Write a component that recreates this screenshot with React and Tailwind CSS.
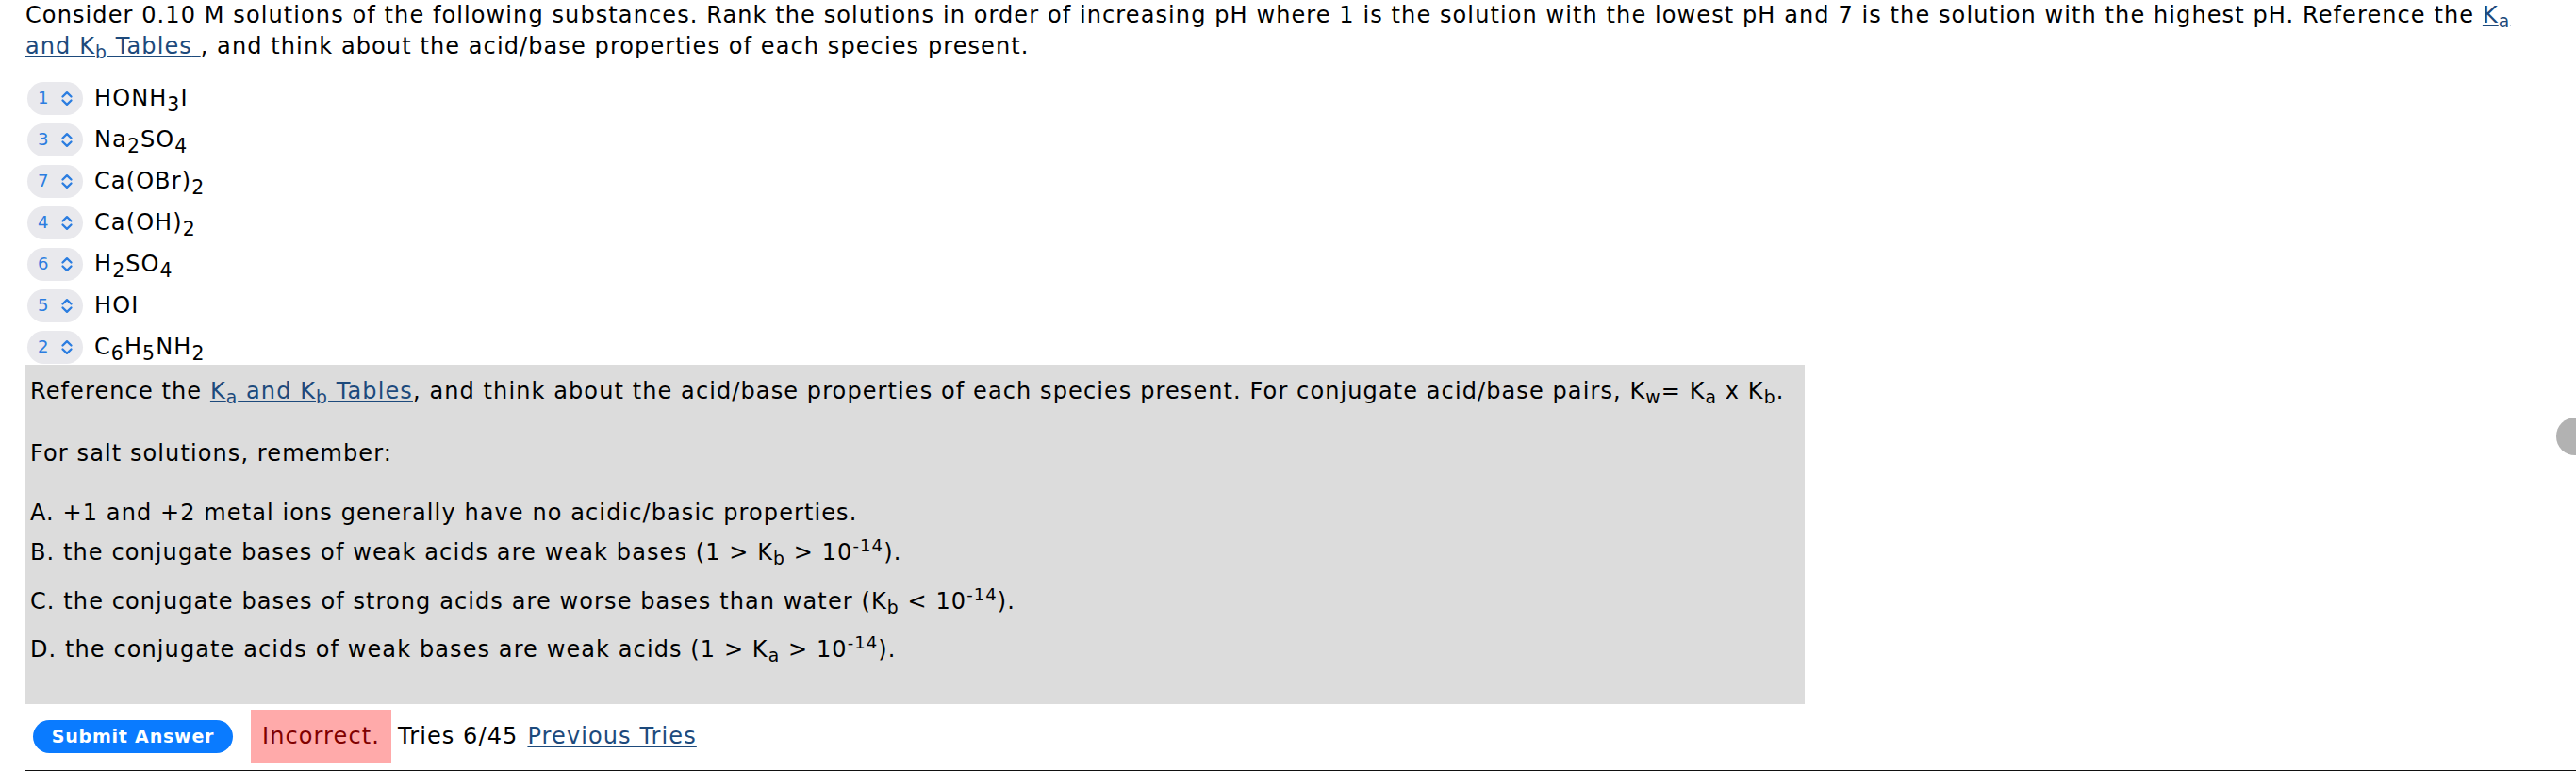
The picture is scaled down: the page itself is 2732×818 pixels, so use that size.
const items = [
  { rank: 1, formula: ['HONH', ['3'], 'I'] },
  { rank: 3, formula: ['Na', ['2'], 'SO', ['4']] },
  { rank: 7, formula: ['Ca(OBr)', ['2']] },
  { rank: 4, formula: ['Ca(OH)', ['2']] },
  { rank: 6, formula: ['H', ['2'], 'SO', ['4']] },
  { rank: 5, formula: ['HOI'] },
  { rank: 2, formula: ['C', ['6'], 'H', ['5'], 'NH', ['2']] },
];

const Sub = ({ children }) => (
  <sub className="text-[0.78em]">{children}</sub>
);

const Chevrons = () => (
  <svg width="14" height="17" viewBox="0 0 14 17" fill="none" stroke="#2b7de0" strokeWidth="2.3" strokeLinecap="round" strokeLinejoin="round">
    <path d="M2.5 6.5 L7 2.2 L11.5 6.5" />
    <path d="M2.5 10.5 L7 14.8 L11.5 10.5" />
  </svg>
);

const Formula = ({ parts }) => (
  <span>
    {parts.map((p, i) =>
      Array.isArray(p) ? (
        <sub key={i} className="text-[0.85em] bottom-[-0.3em]">{p[0]}</sub>
      ) : (
        <span key={i}>{p}</span>
      )
    )}
  </span>
);

export default function App() {
  return (
    <div className="relative min-h-[818px] w-full overflow-hidden bg-white font-['DejaVu_Sans',sans-serif] text-[24px] tracking-[1.1px] text-black">
      <div className="pl-[27px]">
        {/* Question */}
        <p className="leading-[33px]">
          Consider 0.10 M solutions of the following substances. Rank the solutions in order of increasing pH where 1 is the solution with the lowest pH and 7 is the solution with the highest pH. Reference the{' '}
          <a href="#" className="text-[#1d4a7c] underline">
            K<Sub>a</Sub>
            <br />
            and K<Sub>b</Sub> Tables{' '}
          </a>
          , and think about the acid/base properties of each species present.
        </p>

        {/* Ranking rows */}
        <div className="mt-[16px] flex flex-col">
          {items.map((item) => (
            <div key={item.formula.join('')} className="flex h-[44px] items-center">
              <div className="ml-[2px] flex h-[35px] w-[59px] items-center rounded-full bg-[#e9e9ed] pl-[11px] pr-[10px] tracking-normal">
                <span className="w-[14px] text-[18px] leading-none text-[#2b7de0]">{item.rank}</span>
                <span className="ml-[11px] flex items-center">
                  <Chevrons />
                </span>
              </div>
              <div className="ml-[12px] leading-[33px]">
                <Formula parts={item.formula} />
              </div>
            </div>
          ))}
        </div>

        {/* Hint box */}
        <div className="mt-[-3px] w-[1887px] bg-[#dcdcdc] pb-[41px] pl-[5px] pt-[12px] leading-[33px]">
          <p>
            Reference the{' '}
            <a href="#" className="text-[#1d4a7c] underline">
              K<Sub>a</Sub> and K<Sub>b</Sub> Tables
            </a>
            , and think about the acid/base properties of each species present. For conjugate acid/base pairs, K<Sub>w</Sub>= K<Sub>a</Sub> x K<Sub>b</Sub>.
          </p>
          <p className="mt-[33px]">For salt solutions, remember:</p>
          <div className="mt-[30px]">A. +1 and +2 metal ions generally have no acidic/basic properties.</div>
          <div className="mt-[9px]">
            B. the conjugate bases of weak acids are weak bases (1 &gt; K<Sub>b</Sub> &gt; 10<sup>-14</sup>).
          </div>
          <div className="mt-[19px]">
            C. the conjugate bases of strong acids are worse bases than water (K<Sub>b</Sub> &lt; 10<sup>-14</sup>).
          </div>
          <div className="mt-[18px]">
            D. the conjugate acids of weak bases are weak acids (1 &gt; K<Sub>a</Sub> &gt; 10<sup>-14</sup>).
          </div>
        </div>

        {/* Submit row */}
        <div className="mt-[6px] flex h-[56px] items-center">
          <button className="ml-[8px] flex h-[35px] w-[212px] items-center justify-center rounded-full bg-[#0a7bff] text-[19px] font-bold tracking-[0.8px] text-white">
            Submit Answer
          </button>
          <div className="ml-[19px] flex h-[56px] items-center bg-[#ffaaaa] px-[12px] text-[#800000]">
            Incorrect.
          </div>
          <span className="ml-[7px]">Tries 6/45</span>
          <a href="#" className="ml-[10px] text-[#1d4a7c] underline">
            Previous Tries
          </a>
        </div>

        <div className="mt-[8px] border-t-2 border-[#111]" />
      </div>

      {/* side handle */}
      <div className="absolute left-[2711px] top-[443px] h-[40px] w-[40px] rounded-full bg-[#b2b2b2]" />
    </div>
  );
}
